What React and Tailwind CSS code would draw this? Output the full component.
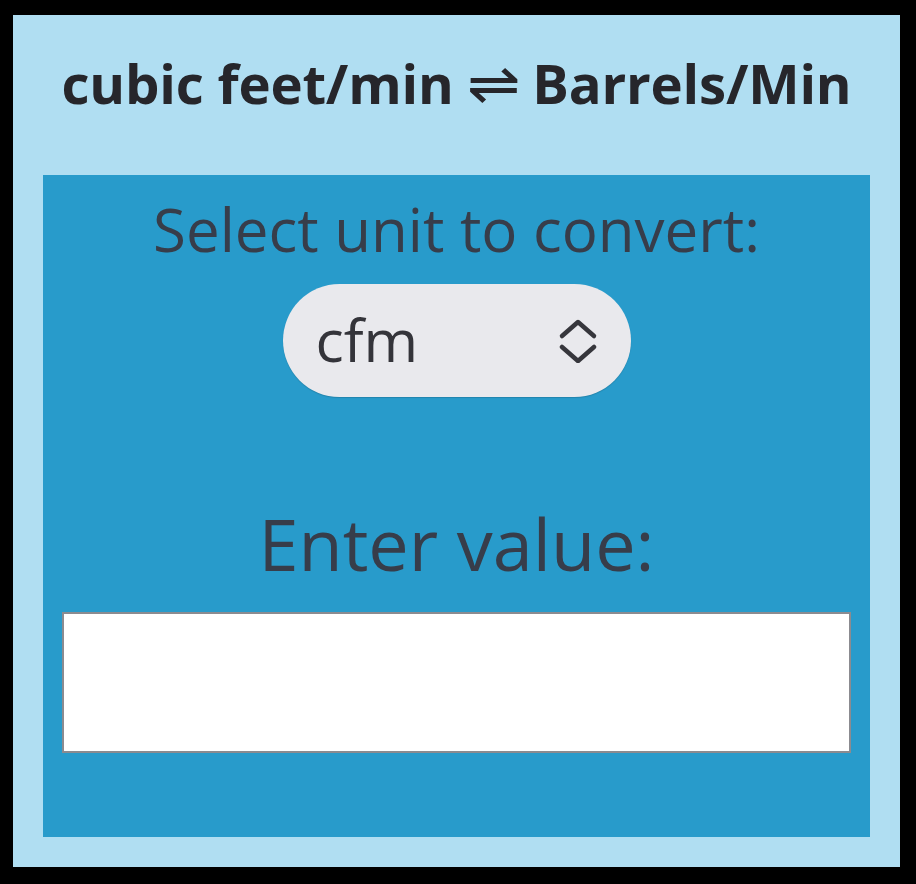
import React from "react";

export default function App() {
  return (
    <div className="w-[916px] h-[884px] bg-black pt-[15px] pl-[13px] pr-[16px] pb-[17px]" style={{ fontFamily: '"Open Sans", "Noto Sans", sans-serif' }}>
      <div className="w-full h-full bg-[#b0def2] flex flex-col px-[30px] pb-[30px]">
        <div className="mt-[38px] h-[56px] flex justify-center">
          <h1 className="text-[54.5px] font-bold text-[#26262b] tracking-[-0.2px] leading-none flex items-baseline whitespace-nowrap">
            <span>cubic feet/min</span>
            <span className="mx-[15px] font-normal text-[58px] scale-x-110 inline-block">⇌</span>
            <span>Barrels/Min</span>
          </h1>
        </div>
        <div className="mt-[66px] flex-1 bg-[#289bcb] flex flex-col items-center px-[19px]">
          <div className="mt-[24px] text-[60px] leading-none text-[#373d4a] whitespace-nowrap">Select unit to convert:</div>
          <div className="mt-[25px] w-[348px] h-[113px] rounded-full bg-[#e9e9ed] flex items-center justify-between pl-[33px] pr-[32px] shadow-[0_1px_1px_rgba(0,0,0,0.15)]">
            <span className="text-[59px] text-[#34343a] leading-none pb-[2px]">cfm</span>
            <svg width="42" height="44" viewBox="0 0 42 44" fill="none" stroke="#36363c" strokeWidth="4.5" strokeLinecap="round" strokeLinejoin="round">
              <path d="M5 17 L21 3 L37 17" />
              <path d="M5 28 L21 42 L37 28" />
            </svg>
          </div>
          <div className="mt-[110px] text-[72px] leading-none text-[#373d4a] whitespace-nowrap">Enter value:</div>
          <input className="mt-[33px] w-full h-[141px] bg-white border-2 border-[#8b8b90] outline-none" />
        </div>
      </div>
    </div>
  );
}
